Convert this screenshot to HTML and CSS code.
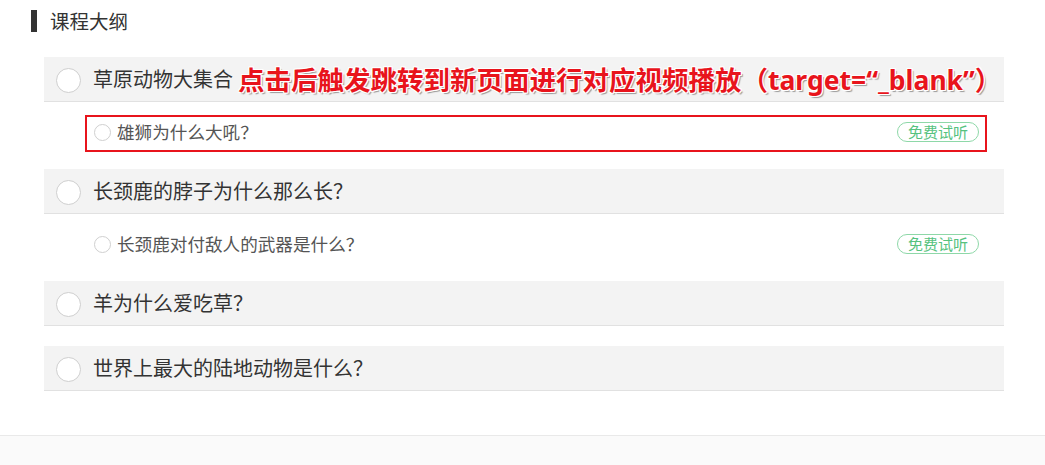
FILE: index.html
```html
<!DOCTYPE html>
<html lang="zh-CN">
<head>
<meta charset="utf-8">
<title>课程大纲</title>
<link rel="stylesheet" href="styles.css">
</head>
<body>
<div class="page">
  <div class="header">
    <span class="header-bar"></span>
    <h2 class="header-title">课程大纲</h2>
  </div>

  <div class="outline">
    <div class="group">
      <div class="chapter">
        <span class="dot-lg"></span>
        <span class="chapter-title">草原动物大集合</span>
        <span class="note">点击后触发跳转到新页面进行对应视频播放（target=“_blank”）</span>
      </div>
      <div class="lessons">
        <a class="lesson" href="#" target="_blank">
          <span class="dot-sm"></span>
          <span class="lesson-title">雄狮为什么大吼？</span>
          <span class="badge">免费试听</span>
          <span class="highlight"></span>
        </a>
      </div>
    </div>

    <div class="group">
      <div class="chapter">
        <span class="dot-lg"></span>
        <span class="chapter-title">长颈鹿的脖子为什么那么长？</span>
      </div>
      <div class="lessons">
        <a class="lesson" href="#" target="_blank">
          <span class="dot-sm"></span>
          <span class="lesson-title">长颈鹿对付敌人的武器是什么？</span>
          <span class="badge">免费试听</span>
        </a>
      </div>
    </div>

    <div class="group">
      <div class="chapter">
        <span class="dot-lg"></span>
        <span class="chapter-title">羊为什么爱吃草？</span>
      </div>
    </div>

    <div class="group">
      <div class="chapter">
        <span class="dot-lg"></span>
        <span class="chapter-title">世界上最大的陆地动物是什么？</span>
      </div>
    </div>
  </div>

  <div class="footer"></div>
</div>
</body>
</html>
```

FILE: styles.css
```css
* { box-sizing: border-box; }

html, body {
  margin: 0;
  padding: 0;
  background: #fff;
  font-family: "Noto Sans CJK SC", "Noto Sans", sans-serif;
  color: #333;
}

.page {
  width: 1045px;
  height: 465px;
  display: flex;
  flex-direction: column;
  overflow: hidden;
}

.header {
  display: flex;
  align-items: center;
  gap: 13px;
  height: 22px;
  margin: 10px 0 25px 31px;
}

.header-bar {
  width: 6px;
  height: 22px;
  background: #333;
}

.header-title {
  margin: 0;
  font-size: 19.5px;
  font-weight: normal;
  color: #333;
  line-height: 22px;
}

.outline {
  margin-left: 44px;
  width: 960px;
}

.group {
  margin-bottom: 20px;
}

.chapter {
  position: relative;
  display: flex;
  align-items: center;
  height: 45px;
  padding-left: 12px;
  background: #f3f3f3;
  border-bottom: 1px solid #e1e1e1;
}

.dot-lg {
  flex: none;
  width: 25px;
  height: 25px;
  border-radius: 50%;
  border: 1px solid #cfcfcf;
  background: #fff;
  margin-right: 12px;
  margin-top: 3px;
}

.chapter-title {
  font-size: 20px;
  color: #333;
  line-height: 28px;
}

.note {
  position: absolute;
  left: 194px;
  top: 4px;
  font-family: "Noto Sans", "Noto Sans CJK SC", sans-serif;
  font-weight: bold;
  font-size: 26.5px;
  line-height: 38px;
  color: #e8141c;
  white-space: nowrap;
  text-shadow:
    -1px -1px 0 #fff, 1px -1px 0 #fff, -1px 1px 0 #fff, 1px 1px 0 #fff,
    0 -1px 0 #fff, 0 1px 0 #fff, -1px 0 0 #fff, 1px 0 0 #fff,
    2px 2px 1px #9a9a9a;
}

.lessons {
  padding-top: 13px;
}

.lesson {
  position: relative;
  display: flex;
  align-items: center;
  height: 34px;
  padding: 0 25px 0 50px;
  text-decoration: none;
}

.dot-sm {
  flex: none;
  width: 17px;
  height: 17px;
  border-radius: 50%;
  border: 1px solid #d0d0d0;
  background: #fff;
  margin-right: 6px;
}

.lesson-title {
  flex: 1;
  font-size: 17.6px;
  color: #555;
  line-height: 24px;
}

.badge {
  flex: none;
  height: 20px;
  padding: 0 10px;
  border: 1px solid #8ed8a8;
  border-radius: 10px;
  font-size: 15px;
  line-height: 18px;
  color: #56c27e;
}

.highlight {
  position: absolute;
  left: 41px;
  top: 0;
  width: 902px;
  height: 37px;
  border: 2px solid #e8141c;
  pointer-events: none;
}

.footer {
  margin-top: auto;
  height: 30px;
  background: #fafafa;
  border-top: 1px solid #e9e9e9;
}
```
